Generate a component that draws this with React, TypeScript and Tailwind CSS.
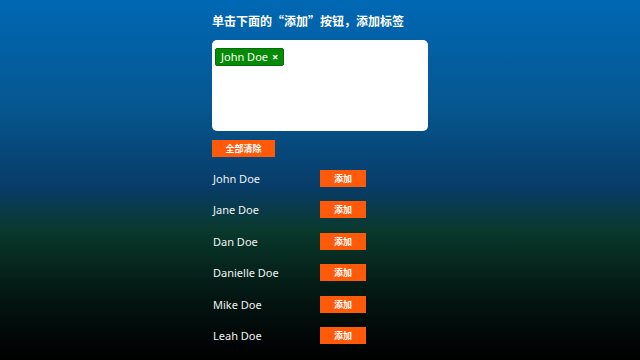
import React from "react";

const names = ["John Doe", "Jane Doe", "Dan Doe", "Danielle Doe", "Mike Doe", "Leah Doe"];
const cjk = { fontFamily: '"Noto Sans CJK SC", sans-serif' };

export default function App() {
  return (
    <div
      className="w-[640px] h-[360px] overflow-hidden text-white"
      style={{
        background:
          "linear-gradient(to bottom, #0068b4 0%, #05568f 30%, #083c68 52%, #09392c 64%, #041a14 80%, #010606 94%, #000 100%)",
        fontFamily: '"Noto Sans", "Noto Sans CJK SC", sans-serif',
      }}
    >
      <div className="ml-[212px] w-[216px] pt-[12px] flex flex-col">
        <div className="text-[12px] font-bold leading-[17px] h-[17px]" style={cjk}>单击下面的“添加”按钮，添加标签</div>
        <div className="mt-[11px] h-[91px] bg-white rounded-[5px] p-[3px]">
          <div className="inline-flex items-center h-[18px] px-[5px] bg-[#058b05] border border-[#0a6a0a] rounded-[2px] text-[11px] leading-none">
            <span>John Doe</span>
            <span className="ml-[4px] text-[11px] font-bold">×</span>
          </div>
        </div>
        <div className="mt-[9px] w-[63px] h-[17px] bg-[#ff5a0a] flex items-center justify-center text-[9px] font-bold leading-none" style={cjk}>全部清除</div>
        <div className="mt-[13px] flex flex-col gap-[14.4px]">
          {names.map((n) => (
            <div key={n} className="flex items-center h-[17px]">
              <div className="w-[108px] pl-[1px] text-[11px] leading-none text-[#f2f2f2]">{n}</div>
              <div className="w-[46px] h-[17px] bg-[#ff5a0a] flex items-center justify-center text-[9px] font-bold leading-none" style={cjk}>添加</div>
            </div>
          ))}
        </div>
      </div>
    </div>
  );
}
